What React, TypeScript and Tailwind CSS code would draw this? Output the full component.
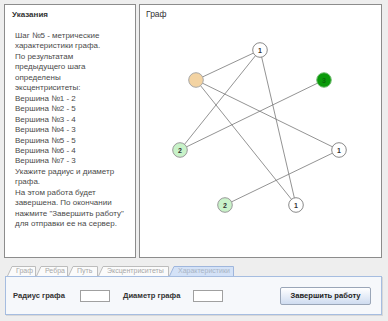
import React from "react";

const font = { fontFamily: '"Liberation Sans", Arial, sans-serif' };

const lines = [
  "Шаг №5 - метрические",
  "характеристики графа.",
  "По результатам",
  "предыдущего шага",
  "определены",
  "эксцентриситеты:",
  "Вершина №1 - 2",
  "Вершина №2 - 5",
  "Вершина №3 - 4",
  "Вершина №4 - 3",
  "Вершина №5 - 5",
  "Вершина №6 - 4",
  "Вершина №7 - 3",
  "Укажите радиус и диаметр",
  "графа.",
  "На этом работа будет",
  "завершена. По окончании",
  "нажмите \"Завершить работу\"",
  "для отправки ее на сервер.",
];

type N = { x: number; y: number; label: string; fill: string; stroke: string; text: string };

const nodes: Record<string, N> = {
  a: { x: 120, y: 45, label: "1", fill: "#ffffff", stroke: "#8a8a8a", text: "#333" },
  b: { x: 56, y: 75, label: "", fill: "#f3d3a2", stroke: "#a8a8a8", text: "#333" },
  c: { x: 184, y: 75, label: "3", fill: "#0a9a0a", stroke: "#7ac07a", text: "#0a6a0a" },
  d: { x: 40, y: 145, label: "2", fill: "#c8f2c8", stroke: "#9a9a9a", text: "#333" },
  e: { x: 199, y: 145, label: "1", fill: "#ffffff", stroke: "#8a8a8a", text: "#333" },
  f: { x: 85, y: 200, label: "2", fill: "#c8f2c8", stroke: "#9a9a9a", text: "#333" },
  g: { x: 156, y: 200, label: "1", fill: "#ffffff", stroke: "#8a8a8a", text: "#333" },
};

const edges: [string, string][] = [
  ["a", "b"],
  ["a", "d"],
  ["a", "g"],
  ["b", "e"],
  ["b", "g"],
  ["c", "d"],
  ["e", "f"],
];

function Tab({ label, w, active }: { label: string; w: number; active?: boolean }) {
  return (
    <div className="relative h-[10px]" style={{ width: w }}>
      <svg className="absolute inset-0" width={w} height={10}>
        <path
          d={`M0.5 10 L5 0.5 L${w - 0.5} 0.5 L${w - 0.5} 10`}
          fill={active ? "#d4e2f7" : "#fbfbfb"}
          stroke={active ? "#9fb6dc" : "#bcbcbc"}
        />
      </svg>
      <div
        className={`relative pl-[9px] text-[7px] leading-[10px] whitespace-nowrap ${active ? "text-[#a9b4c4]" : "text-[#a8a8a8]"}`}
      >
        {label}
      </div>
    </div>
  );
}

export default function App() {
  return (
    <div className="w-[388px] h-[321px] bg-[#eeeeee] pt-[4px] pl-[4px] overflow-hidden" style={font}>
      <div className="flex gap-[3px] h-[254px]">
        <div className="w-[132px] h-full border border-[#8c8c8c] bg-white px-[7px] pt-[4px]">
          <div className="text-[8px] font-bold text-[#333] leading-[11px]">Указания</div>
          <div className="mt-[11px] pl-[3px] text-[8px] leading-[10.45px] text-[#4a4a4a] whitespace-nowrap">
            {lines.map((l, i) => (
              <div key={i}>{l}</div>
            ))}
          </div>
        </div>
        <div className="relative w-[243px] h-full border border-[#8c8c8c] bg-white px-[6px] pt-[4px]">
          <div className="text-[8.5px] text-[#333] leading-[11px]">Граф</div>
          <svg className="absolute inset-0" width="241" height="252">
            {edges.map(([p, q], i) => (
              <line
                key={i}
                x1={nodes[p].x}
                y1={nodes[p].y}
                x2={nodes[q].x}
                y2={nodes[q].y}
                stroke="#777777"
                strokeWidth="0.8"
              />
            ))}
            {Object.entries(nodes).map(([k, n]) => (
              <g key={k}>
                <circle cx={n.x} cy={n.y} r="7.3" fill={n.fill} stroke={n.stroke} strokeWidth="1" />
                {n.label && (
                  <text
                    x={n.x}
                    y={n.y + 2.5}
                    textAnchor="middle"
                    fontSize="7"
                    fontWeight="bold"
                    fill={n.text}
                    style={font}
                  >
                    {n.label}
                  </text>
                )}
              </g>
            ))}
          </svg>
        </div>
      </div>
      <div className="mt-[8px] flex pl-[3px] h-[10px]">
        <Tab label="Граф" w={29} />
        <Tab label="Ребра" w={32} />
        <Tab label="Путь" w={30} />
        <Tab label="Эксцентриситеты" w={71} />
        <Tab label="Характеристики" w={65} active />
      </div>
      <div className="w-[377px] h-[39px] ml-[1px] border border-[#a6bde0] bg-[#f6f8fb] flex items-center pl-[7px] shadow-[1px_1px_0_#d8d8d8]">
        <div className="text-[7.6px] font-bold text-[#333] w-[67px] whitespace-nowrap">Радиус графа</div>
        <div className="w-[30px] h-[12px] border border-[#a0a0a0] bg-white"></div>
        <div className="ml-[13px] text-[7.6px] font-bold text-[#333] w-[70px] whitespace-nowrap">Диаметр графа</div>
        <div className="w-[30px] h-[12px] border border-[#a0a0a0] bg-white"></div>
        <button className="ml-[57px] w-[91px] h-[18px] rounded-[2px] border border-[#9aa6b8] bg-gradient-to-b from-white to-[#cfdcf0] text-[7.6px] font-bold text-[#222] leading-none">
          Завершить работу
        </button>
      </div>
    </div>
  );
}
